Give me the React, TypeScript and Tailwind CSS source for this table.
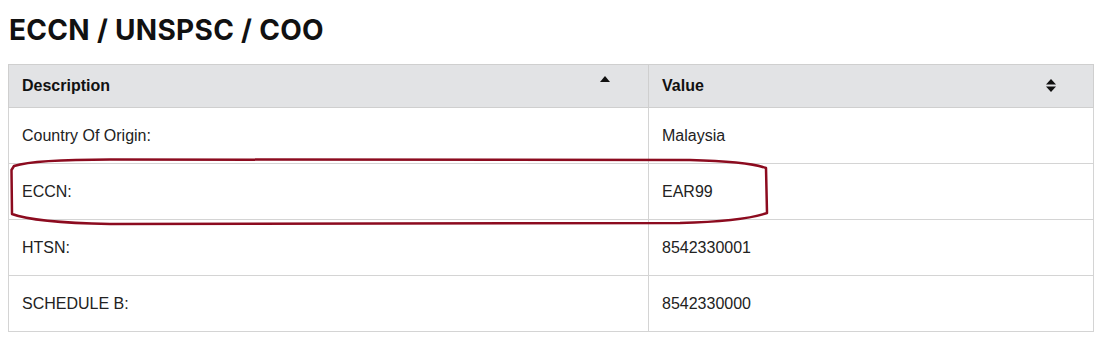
import React from 'react';

const rows = [
  { label: 'Country Of Origin:', value: 'Malaysia' },
  { label: 'ECCN:', value: 'EAR99' },
  { label: 'HTSN:', value: '8542330001' },
  { label: 'SCHEDULE B:', value: '8542330000' },
];

const SortUp = () => (
  <svg width="10" height="6" viewBox="0 0 10 6" className="block">
    <path d="M0 6 L5 0 L10 6 Z" fill="#111" />
  </svg>
);

const SortBoth = () => (
  <svg width="10" height="13" viewBox="0 0 10 13" className="block">
    <path d="M0 5.5 L5 0 L10 5.5 Z" fill="#111" />
    <path d="M0 7.5 L5 13 L10 7.5 Z" fill="#111" />
  </svg>
);

export default function App() {
  return (
    <div className="w-[1101px] h-[340px] bg-white relative" style={{ fontFamily: '"Liberation Sans", Arial, sans-serif' }}>
      <h2 className="pl-[9px] pt-[13px] h-[64px] text-[28px] leading-[34px] font-bold text-[#111] tracking-[0.3px]" style={{ fontFamily: 'Inter, "Liberation Sans", sans-serif' }}>
        ECCN / UNSPSC / COO
      </h2>

      {/* Table */}
      <div className="ml-[8px] w-[1086px]">
        <table className="w-full border-collapse text-[16px] text-[#222]">
          <thead>
            <tr className="bg-[#e2e3e5] h-[43px]">
              <th className="w-[640px] border border-[#cfcfcf] px-[13px] text-left font-bold text-[#111]">
                <div className="flex items-center justify-between">
                  <span>Description</span>
                  <span className="mr-[25px] -mt-[14px]"><SortUp /></span>
                </div>
              </th>
              <th className="border border-[#cfcfcf] px-[13px] text-left font-bold text-[#111]">
                <div className="flex items-center justify-between">
                  <span>Value</span>
                  <span className="mr-[24px] -mt-[2px]"><SortBoth /></span>
                </div>
              </th>
            </tr>
          </thead>
          <tbody>
            {rows.map((r) => (
              <tr key={r.label} className="h-[56px]">
                <td className="border border-[#d4d4d4] px-[13px]">{r.label}</td>
                <td className="border border-[#d4d4d4] px-[13px]">{r.value}</td>
              </tr>
            ))}
          </tbody>
        </table>
      </div>

      {/* Hand-drawn highlight around ECCN row */}
      <svg className="absolute left-0 top-0 pointer-events-none" width="1101" height="340" viewBox="0 0 1101 340">
        <path
          d="M14 166 C 30 161, 70 159.5, 110 159.5 L 690 160 C 730 161, 755 164, 766 168 L 767 213 C 750 219, 720 222, 680 223 L 110 224 C 60 223, 25 219, 12 214 L 11.5 170 Z"
          fill="none"
          stroke="#8c0b1f"
          strokeWidth="2.5"
          strokeLinejoin="round"
        />
      </svg>
    </div>
  );
}
